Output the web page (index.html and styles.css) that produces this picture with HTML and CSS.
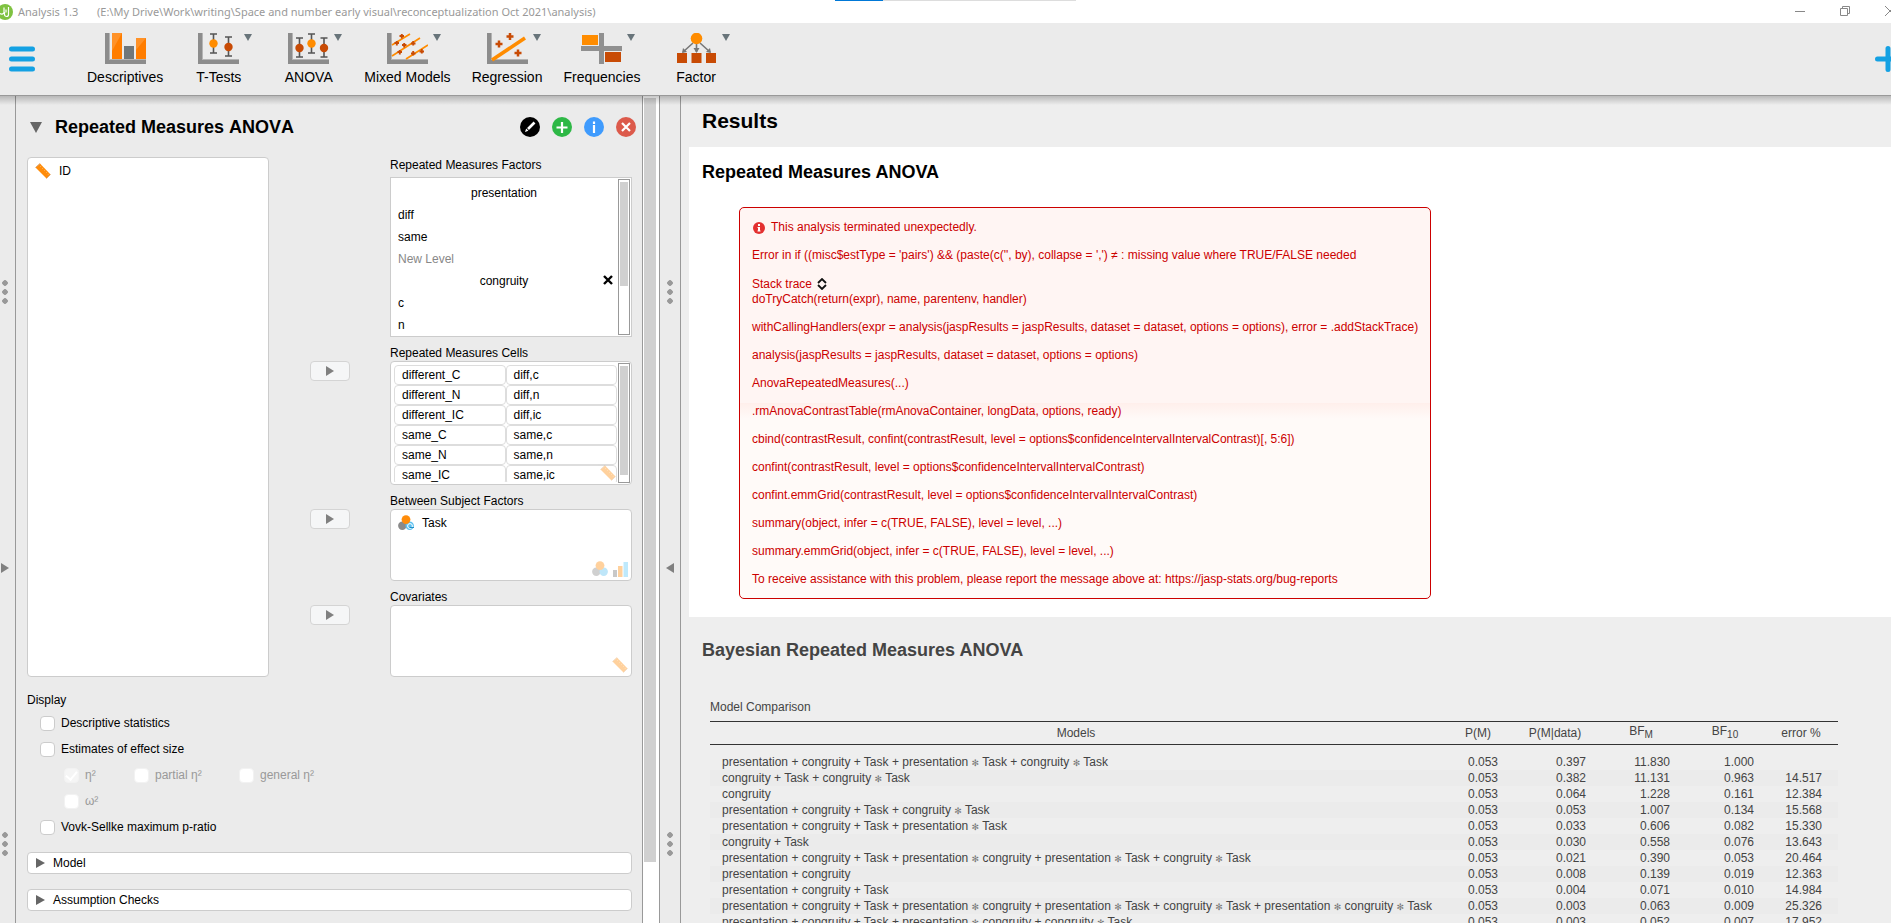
FILE: index.html
```html
<!DOCTYPE html>
<html lang="en">
<head>
<meta charset="utf-8">
<title>Analysis 1.3</title>
<link rel="stylesheet" href="styles.css">
</head>
<body>
<svg class="defs" aria-hidden="true">
  <defs>
    <symbol id="ruler" viewBox="0 0 16 16">
      <path d="M5 0.5L15.5 11.5L11.5 15.5L0.5 4.5Z" fill="#ff8c0a"/>
      <path d="M5 0.5L0.5 4.5M15.5 11.5L11.5 15.5" stroke="#d9a878" stroke-width="1"/>
      <path d="M6.5 2.5l-1.500 1.500M8.500 4.500l-1.500 1.500M10.500 6.500l-1.500 1.500M12.500 8.500l-1.500 1.500M14.200 10.500l-1.500 1.500" stroke="#ffb45c" stroke-width="0.800"/>
    </symbol>
    <symbol id="nominal" viewBox="0 0 16 16">
      <circle cx="4.300" cy="10.800" r="4.200" fill="#8a8a8a"/>
      <circle cx="11.700" cy="10.800" r="4.200" fill="#5cc0f0"/>
      <circle cx="8" cy="4.600" r="4.400" fill="#ff8c0a"/>
    </symbol>
    <symbol id="axes" viewBox="0 0 41 31">
      <path d="M0 0h5v26h36v5H0z" fill="#8c8c8c"/>
      <path d="M4 0h1v26h36v1H4z" fill="#b4b4b4"/>
    </symbol>
  </defs>
</svg>

<header class="titlebar">
  <svg class="logo" viewBox="0 0 13 16"><circle cx="5" cy="8" r="8" fill="#7fc241"/><path d="M8.500 3v7.500a2 2 0 0 1-4 0V8M4 3.500v5a2.500 2.500 0 0 1-4 1M6 5.500v3" fill="none" stroke="#fff" stroke-width="1.200"/></svg>
  <span class="app-name">Analysis 1.3</span>
  <span class="file-path">(E:\My Drive\Work\writing\Space and number early visual\reconceptualization Oct 2021\analysis)</span>
  <div class="top-progress"></div>
  <div class="window-buttons">
    <button aria-label="Minimize"><svg viewBox="0 0 10 10"><path d="M0 5.500h10"/></svg></button>
    <button aria-label="Restore"><svg viewBox="0 0 10 10"><path d="M.5 2.500h7v7h-7zM2.500 2.500v-2h7v7h-2"/></svg></button>
    <button aria-label="Close"><svg viewBox="0 0 10 10"><path d="M0 0l10 10M10 0L0 10"/></svg></button>
  </div>
</header>

<nav class="ribbon">
  <button class="menu-btn" aria-label="Menu"><svg viewBox="0 0 26 26"><path d="M2.500 3h21M2.500 13h21M2.500 23h21" stroke="#14a1e3" stroke-width="5" stroke-linecap="round"/></svg></button>
  <div class="modules">
    <button class="module">
      <span class="pic"><svg viewBox="0 0 41 31"><use href="#axes"/><path d="M7 0h10v26H7z" fill="#ff7d00"/><path d="M7 0h10L7 18z" fill="#ff9228"/><path d="M19 13h10v13H19z" fill="#6f777b"/><path d="M31 5h10v21H31z" fill="#ff7d00"/><path d="M31 5h10L31 17z" fill="#ff9228"/></svg></span>
      <span>Descriptives</span>
    </button>
    <button class="module">
      <span class="pic has-menu"><svg viewBox="0 0 41 31"><use href="#axes"/><path d="M12 1h7M15.500 1v19M12 20h7M27 4h7M30.500 4v19M27 23h7" stroke="#555" stroke-width="1.600" fill="none"/><circle cx="15.500" cy="10.500" r="4.200" fill="#ff8c00"/><circle cx="30.500" cy="14" r="4.200" fill="#c84b05"/></svg></span>
      <span>T-Tests</span>
    </button>
    <button class="module">
      <span class="pic has-menu"><svg viewBox="0 0 41 31"><use href="#axes"/><path d="M8 5h7M11.500 5v19M8 24h7M20 1h7M23.500 1v19M20 20h7M32.500 5h7M36 5v19M32.500 24h7" stroke="#555" stroke-width="1.600" fill="none"/><circle cx="11.500" cy="15" r="4.200" fill="#c84b05"/><circle cx="23.500" cy="10.500" r="4.200" fill="#ff8c00"/><circle cx="36" cy="15" r="4.200" fill="#c84b05"/></svg></span>
      <span>ANOVA</span>
    </button>
    <button class="module">
      <span class="pic has-menu"><svg viewBox="0 0 41 31"><use href="#axes"/><path d="M5 12L23 1M5 23L33 5M19 26L41 12" stroke="#ff8c00" stroke-width="1.700"/><path d="M12.500 3h4.500M14.800 1v4.500M7.500 10H12M9.800 8v4.500M15 12h4.500M17.200 10v4.500M24 10.500h4.500M26.200 8v4.500M10.500 19H15M12.800 17v4.500M24 20.500h4.500M26.200 18v4.500M32.500 18.500H37M34.800 16v4.500" stroke="#c84b05" stroke-width="1.900"/></svg></span>
      <span>Mixed Models</span>
    </button>
    <button class="module">
      <span class="pic has-menu"><svg viewBox="0 0 41 31"><use href="#axes"/><path d="M5 27L38 5" stroke="#ff8c00" stroke-width="3.600"/><path d="M19.500 3.500h7M23 0v7M8.500 11h7M12 7.500v7M27.500 20h7M31 16.500v7" stroke="#c84b05" stroke-width="2.500"/></svg></span>
      <span>Regression</span>
    </button>
    <button class="module">
      <span class="pic has-menu"><svg viewBox="0 0 41 31"><path d="M0 13h41v5H0zM18 0h5v31h-5z" fill="#909090"/><path d="M1 2h16v10H1z" fill="#ff8c00"/><path d="M24 19h16v10H24z" fill="#c84b05"/></svg></span>
      <span>Frequencies</span>
    </button>
    <button class="module">
      <span class="pic has-menu"><svg viewBox="0 0 41 31"><path d="M17 10L7 19M20.500 11v8M24 10l10 9" stroke="#777" stroke-width="1.600"/><path d="M6 20l1-5 4 4zM17.500 15h6l-3 5zM35 20l-1-5-4 4z" fill="#777"/><circle cx="20.500" cy="5.500" r="5.800" fill="#ff8c00"/><path d="M1 20h10v10H1zM15.500 20h10v10h-10zM30 20h10v10H30z" fill="#c84b05"/></svg></span>
      <span>Factor</span>
    </button>
  </div>
  <button class="add-btn" aria-label="Add modules"><svg viewBox="0 0 26 26"><path d="M2.500 13h21M13 2.500v21" stroke="#14a1e3" stroke-width="5" stroke-linecap="round"/></svg></button>
</nav>

<main class="workspace">
  <div class="splitter">
    <i class="dots dots-top"></i>
    <button class="split-arrow" aria-label="Show data"><svg viewBox="0 0 8 10"><path d="M0 0l8 5-8 5z"/></svg></button>
    <i class="dots dots-bottom"></i>
  </div>

  <section class="form-pane">
    <div class="form">
      <div class="form-head">
        <svg class="fold" viewBox="0 0 12 11"><path d="M0 0h12L6 11z"/></svg>
        <h2>Repeated Measures ANOVA</h2>
        <div class="actions">
          <button aria-label="Rename"><svg viewBox="0 0 20 20"><circle cx="10" cy="10" r="10" fill="#000"/><path d="M8 12l6.500-6.500" stroke="#fff" stroke-width="2.600"/><path d="M5 15l1.200-3.400 2.200 2.200z" fill="#fff"/></svg></button>
          <button aria-label="Duplicate"><svg viewBox="0 0 20 20"><circle cx="10" cy="10" r="10" fill="#2eb846"/><path d="M4.500 10.500h11M10 5v11" stroke="#fff" stroke-width="2.200"/></svg></button>
          <button aria-label="Information"><svg viewBox="0 0 20 20"><circle cx="10" cy="10" r="10" fill="#3f9bfd"/><path d="M10 8v8M10 4.500V7" stroke="#fff" stroke-width="2.200"/></svg></button>
          <button aria-label="Remove"><svg viewBox="0 0 20 20"><circle cx="10" cy="10" r="10" fill="#dc5a4b"/><path d="M6 6l8 8M14 6l-8 8" stroke="#fff" stroke-width="2.200"/></svg></button>
        </div>
      </div>

      <div class="assign">
        <div class="var-box source"><div class="var"><svg><use href="#ruler"/></svg>ID</div></div>

        <div class="target factors">
          <h3>Repeated Measures Factors</h3>
          <div class="var-box square">
            <div class="factor-list">
              <input class="factor" aria-label="Factor 1" value="presentation">
              <input aria-label="Level 1" value="diff">
              <input aria-label="Level 2" value="same">
              <input aria-label="Add level" placeholder="New Level">
              <div class="factor-row"><input class="factor" aria-label="Factor 2" value="congruity"><button aria-label="Delete factor"><svg viewBox="0 0 10 10"><path d="M1 1l8 8M9 1L1 9" stroke="#000" stroke-width="2.400"/></svg></button></div>
              <input aria-label="Level 1" value="c">
              <input aria-label="Level 2" value="n">
            </div>
            <div class="scroll"><i class="thumb two-thirds"></i></div>
          </div>
        </div>

        <button class="move" aria-label="Assign cells"><svg viewBox="0 0 8 10"><path d="M0 0l8 5-8 5z"/></svg></button>
        <div class="target cells">
          <h3>Repeated Measures Cells</h3>
          <div class="var-box">
            <div class="cell-grid">
              <span>different_C</span><span>diff,c</span>
              <span>different_N</span><span>diff,n</span>
              <span>different_IC</span><span>diff,ic</span>
              <span>same_C</span><span>same,c</span>
              <span>same_N</span><span>same,n</span>
              <span>same_IC</span><span>same,ic</span>
            </div>
            <div class="scroll"><i class="thumb most"></i></div>
            <div class="allowed beside-scroll"><svg><use href="#ruler"/></svg></div>
          </div>
        </div>

        <button class="move" aria-label="Assign between subject factors"><svg viewBox="0 0 8 10"><path d="M0 0l8 5-8 5z"/></svg></button>
        <div class="target small">
          <h3>Between Subject Factors</h3>
          <div class="var-box">
            <div class="var"><svg viewBox="0 0 16 16"><use href="#nominal"/><circle cx="12" cy="11" r="2.400" fill="none" stroke="#fff"/><path d="M11.500 12.500h5" stroke="#1e8fc8"/></svg>Task</div>
            <div class="allowed"><svg><use href="#nominal"/></svg><svg viewBox="0 0 16 16"><path d="M1 9h4v7H1z" fill="#777"/><path d="M6 5h4.500v11H6z" fill="#ff8c0a"/><path d="M11.500 1H16v15h-4.500z" fill="#5cc8f8"/></svg></div>
          </div>
        </div>

        <button class="move" aria-label="Assign covariates"><svg viewBox="0 0 8 10"><path d="M0 0l8 5-8 5z"/></svg></button>
        <div class="target small">
          <h3>Covariates</h3>
          <div class="var-box"><div class="allowed"><svg><use href="#ruler"/></svg></div></div>
        </div>
      </div>

      <fieldset class="display">
        <legend>Display</legend>
        <label><input type="checkbox">Descriptive statistics</label>
        <label><input type="checkbox">Estimates of effect size</label>
        <div class="effects">
          <label><input type="checkbox" checked disabled>η²</label>
          <label><input type="checkbox" disabled>partial η²</label>
          <label><input type="checkbox" disabled>general η²</label>
          <label><input type="checkbox" disabled>ω²</label>
        </div>
        <label><input type="checkbox">Vovk-Sellke maximum p-ratio</label>
      </fieldset>

      <button class="section"><svg viewBox="0 0 9 10"><path d="M0 0l9 5-9 5z"/></svg>Model</button>
      <button class="section"><svg viewBox="0 0 9 10"><path d="M0 0l9 5-9 5z"/></svg>Assumption Checks</button>
    </div>
    <div class="form-scroll"><i class="form-thumb"></i></div>
  </section>

  <div class="splitter mid">
    <i class="dots dots-top"></i>
    <button class="split-arrow" aria-label="Hide form"><svg viewBox="0 0 8 10"><path d="M8 0L0 5l8 5z"/></svg></button>
    <i class="dots dots-bottom"></i>
  </div>

  <section class="results">
    <h1>Results</h1>
    <article class="analysis selected">
      <h2>Repeated Measures ANOVA</h2>
      <div class="error-box">
        <p class="lead"><svg viewBox="0 0 12 12"><circle cx="6" cy="6" r="6" fill="#e33030"/><path d="M5 2h2v2H5zM4.500 5H7v4H5V6h-.5zM4.500 8.500h3V9.500h-3z" fill="#fff"/></svg>This analysis terminated unexpectedly.</p>
        <p>Error in if ((misc$estType = 'pairs') &amp;&amp; (paste(c('', by), collapse = ',') ≠ : missing value where TRUE/FALSE needed</p>
        <p class="trace">Stack trace <button aria-label="Toggle stack trace"><svg viewBox="0 0 10 12"><path d="M1 5l4-4 4 4M1 7l4 4 4-4" fill="none" stroke="#111" stroke-width="1.800"/></svg></button></p>
        <p>doTryCatch(return(expr), name, parentenv, handler)</p>
        <p>withCallingHandlers(expr = analysis(jaspResults = jaspResults, dataset = dataset, options = options), error = .addStackTrace)</p>
        <p>analysis(jaspResults = jaspResults, dataset = dataset, options = options)</p>
        <p>AnovaRepeatedMeasures(...)</p>
        <p>.rmAnovaContrastTable(rmAnovaContainer, longData, options, ready)</p>
        <p>cbind(contrastResult, confint(contrastResult, level = options$confidenceIntervalIntervalContrast)[, 5:6])</p>
        <p>confint(contrastResult, level = options$confidenceIntervalIntervalContrast)</p>
        <p>confint.emmGrid(contrastResult, level = options$confidenceIntervalIntervalContrast)</p>
        <p>summary(object, infer = c(TRUE, FALSE), level = level, ...)</p>
        <p>summary.emmGrid(object, infer = c(TRUE, FALSE), level = level, ...)</p>
        <p>To receive assistance with this problem, please report the message above at: https://jasp-stats.org/bug-reports</p>
      </div>
    </article>
    <article class="analysis faded">
      <h2>Bayesian Repeated Measures ANOVA</h2>
      <table>
        <caption>Model Comparison</caption>
        <colgroup><col class="c-models"><col class="c-pm"><col class="c-pmd"><col class="c-bf"><col class="c-bf"><col class="c-err"></colgroup>
        <thead><tr><th>Models</th><th>P(M)</th><th>P(M|data)</th><th>BF<sub>M</sub></th><th>BF<sub>10</sub></th><th>error %</th></tr></thead>
        <tbody>
          <tr><td>presentation + congruity + Task + presentation <i>✻</i> Task + congruity <i>✻</i> Task</td><td>0.053</td><td>0.397</td><td>11.830</td><td>1.000</td><td></td></tr>
          <tr><td>congruity + Task + congruity <i>✻</i> Task</td><td>0.053</td><td>0.382</td><td>11.131</td><td>0.963</td><td>14.517</td></tr>
          <tr><td>congruity</td><td>0.053</td><td>0.064</td><td>1.228</td><td>0.161</td><td>12.384</td></tr>
          <tr><td>presentation + congruity + Task + congruity <i>✻</i> Task</td><td>0.053</td><td>0.053</td><td>1.007</td><td>0.134</td><td>15.568</td></tr>
          <tr><td>presentation + congruity + Task + presentation <i>✻</i> Task</td><td>0.053</td><td>0.033</td><td>0.606</td><td>0.082</td><td>15.330</td></tr>
          <tr><td>congruity + Task</td><td>0.053</td><td>0.030</td><td>0.558</td><td>0.076</td><td>13.643</td></tr>
          <tr><td>presentation + congruity + Task + presentation <i>✻</i> congruity + presentation <i>✻</i> Task + congruity <i>✻</i> Task</td><td>0.053</td><td>0.021</td><td>0.390</td><td>0.053</td><td>20.464</td></tr>
          <tr><td>presentation + congruity</td><td>0.053</td><td>0.008</td><td>0.139</td><td>0.019</td><td>12.363</td></tr>
          <tr><td>presentation + congruity + Task</td><td>0.053</td><td>0.004</td><td>0.071</td><td>0.010</td><td>14.984</td></tr>
          <tr><td>presentation + congruity + Task + presentation <i>✻</i> congruity + presentation <i>✻</i> Task + congruity <i>✻</i> Task + presentation <i>✻</i> congruity <i>✻</i> Task</td><td>0.053</td><td>0.003</td><td>0.063</td><td>0.009</td><td>25.326</td></tr>
          <tr><td>presentation + congruity + Task + presentation <i>✻</i> congruity + congruity <i>✻</i> Task</td><td>0.053</td><td>0.003</td><td>0.052</td><td>0.007</td><td>17.952</td></tr>
        </tbody>
      </table>
    </article>
  </section>
</main>
</body>
</html>
```

FILE: styles.css
```css
* { box-sizing: border-box; }

body {
  margin: 0;
  height: 100vh;
  overflow: hidden;
  display: flex;
  flex-direction: column;
  background: #ebebeb;
  color: #000;
  font: 12px/16px "Liberation Sans", Arial, sans-serif;
}

h1, h2, h3, p { margin: 0; }
svg { display: block; flex: none; }
button { padding: 0; border: 0; background: none; font: inherit; color: inherit; cursor: pointer; }
.defs { position: absolute; width: 0; height: 0; }

/* Title bar */
.titlebar {
  position: relative;
  flex: none;
  height: 23px;
  display: flex;
  align-items: center;
  background: #fff;
  color: #999;
  font-family: "Noto Sans", sans-serif;
  font-size: 11px;
  white-space: pre;
}
.logo { width: 13px; height: 16px; margin-right: 5px; }
.app-name { width: 79px; }
.top-progress {
  position: absolute;
  top: 0;
  left: 44%;
  width: 241px;
  height: 1px;
  margin-left: 3px;
  background: linear-gradient(90deg, #0078d7 48px, #ddd 48px);
}
.window-buttons { display: flex; gap: 35px; margin: 0 -4px 2px auto; }
.window-buttons svg { width: 10px; height: 10px; fill: none; stroke: #888; }

/* Ribbon */
.ribbon {
  flex: none;
  display: flex;
  align-items: flex-start;
  height: 73px;
  padding: 10px 0 0 9px;
  border-bottom: 1px solid #999;
}
.menu-btn, .add-btn { margin-top: 13px; }
.menu-btn svg, .add-btn svg { width: 26px; height: 26px; }
.add-btn { margin-left: auto; margin-right: -10px; }
.modules { display: flex; gap: 21px; margin-left: 52px; }
.module {
  min-width: 69px;
  display: flex;
  flex-direction: column;
  align-items: center;
  gap: 5px;
  font-size: 14px;
  white-space: nowrap;
}
.pic { position: relative; }
.pic svg { width: 41px; height: 31px; }
.has-menu::after {
  content: "";
  position: absolute;
  left: 46px;
  top: 1px;
  border: 4px solid transparent;
  border-top: 7px solid #68747a;
  border-bottom: 0;
}

/* Workspace */
.workspace {
  position: relative;
  flex: 1;
  min-height: 0;
  display: grid;
  grid-template-columns: 16px 644fr 21px 1210fr;
}
.workspace::before {
  content: "";
  position: absolute;
  z-index: 1;
  inset: 0 0 auto;
  height: 9px;
  background: linear-gradient(rgba(0, 0, 0, .22), transparent);
}
.splitter {
  display: grid;
  grid-template-rows: 174px 283fr 30px 249fr 91px;
  justify-items: start;
  padding-left: 1px;
  border-right: 1px solid #999;
}
.mid { padding-left: 6px; }
.dots {
  width: 6px;
  height: 24px;
  margin-left: 1px;
  background: radial-gradient(circle at 3px 3px, #999 2.5px, transparent 3px) 0 0 / 6px 9px;
}
.dots-top { grid-row: 2; margin-top: 10px; }
.split-arrow { grid-row: 3; align-self: center; }
.split-arrow svg { width: 8px; height: 10px; fill: #808080; }
.dots-bottom { grid-row: 5; align-self: start; }

/* Options form */
.form-pane { display: flex; min-width: 0; min-height: 0; overflow: hidden; }
.form { flex: 1; min-width: 0; padding: 21px 10px 0 11px; }
.form-scroll {
  width: 18px;
  padding: 2px 3px 0 1px;
  border-left: 1px solid #999;
  border-right: 1px solid #999;
  background: #fff;
}
.form-thumb { display: block; height: 764px; background: #d0d0d0; }
.form-head { display: flex; align-items: center; padding-left: 3px; height: 20px; }
.fold { width: 12px; height: 11px; margin-right: 13px; fill: #666; }
.form-head h2 { font-size: 18px; line-height: 20px; font-kerning: none; white-space: nowrap; }
.actions { display: flex; gap: 12px; margin-left: auto; margin-right: -4px; }
.actions svg { width: 20px; height: 20px; }

.assign {
  display: grid;
  grid-template-columns: 1fr 121px 1fr;
  row-gap: 8px;
  margin-top: 20px;
}
.source { grid-row: 1 / 5; }
.target { grid-column: 3; display: flex; flex-direction: column; }
.target h3 { font-size: 12px; line-height: 16px; font-weight: 400; }
.target .var-box { flex: 1; }
.factors h3 { margin-bottom: 4px; }
.factors .var-box { height: 160px; flex: none; }
.cells .var-box { height: 124px; flex: none; }
.small .var-box { height: 72px; flex: none; }
.var-box {
  position: relative;
  display: flex;
  align-items: flex-start;
  background: #fff;
  border: 1px solid #ccc;
  border-radius: 4px;
  overflow: hidden;
}
.square { border-radius: 0; }
.var { display: flex; align-items: center; gap: 8px; padding: 5px 7px; }
.var svg, .allowed svg { width: 16px; height: 16px; }
.allowed { position: absolute; right: 3px; bottom: 3px; display: flex; gap: 4px; opacity: .4; }
.beside-scroll { right: 15px; }
.factor-list { flex: 1; min-width: 0; padding-top: 4px; }
.factor-list input {
  display: block;
  width: 100%;
  height: 22px;
  padding: 0 7px;
  border: 0;
  background: none;
  font: inherit;
  color: inherit;
  outline: 0;
}
.factor-list input::placeholder { color: #888; opacity: 1; }
.factor-list .factor { text-align: center; }
.factor-row { position: relative; }
.factor-row button { position: absolute; right: 4px; top: 5px; }
.factor-row svg { width: 10px; height: 10px; }
.scroll {
  align-self: stretch;
  flex: none;
  width: 12px;
  margin: 1px;
  padding: 2px 1px;
  border: 1px solid #999;
}
.thumb { display: block; background: #d0d0d0; }
.two-thirds { height: 69%; }
.most { height: 96%; }
.cell-grid {
  flex: 1;
  display: grid;
  grid-template-columns: 1fr 1fr;
  grid-auto-rows: 20px;
  height: 120px;
  padding: 3px 0 0 3px;
  overflow: hidden;
}
.cell-grid span {
  padding-left: 7px;
  line-height: 18px;
  border: 1px solid #ddd;
  border-radius: 4px;
}
.move {
  grid-column: 2;
  justify-self: center;
  display: flex;
  align-items: center;
  justify-content: center;
  width: 40px;
  height: 20px;
  margin-top: 16px;
  background: #f5f6f7;
  border: 1px solid #d4d4d4;
  border-radius: 4px;
}
.move svg { width: 8px; height: 10px; fill: #808080; }

.display { margin: 15px 0 0; padding: 0; border: 0; }
.display legend { padding: 0; margin-bottom: 2px; }
.display label { display: flex; align-items: center; gap: 6px; height: 26px; padding-left: 13px; }
.display input {
  appearance: none;
  flex: none;
  width: 15px;
  height: 15px;
  margin: 0;
  background: #fff;
  border: 1px solid #ccc;
  border-radius: 4px;
}
.display input:disabled { border-color: #f2f2f2; }
.display input:checked {
  background: #f5f5f5;
  display: flex;
  align-items: center;
  justify-content: center;
}
.display input:checked::before {
  content: "";
  width: 5px;
  height: 9px;
  margin-bottom: 2px;
  border: solid #fff;
  border-width: 0 2px 2px 0;
  transform: rotate(40deg);
}
.effects {
  display: grid;
  grid-template-columns: 70px 105px auto;
  justify-content: start;
  padding-left: 37px;
  color: #999;
}
.effects label { padding-left: 0; }
.section {
  display: flex;
  align-items: center;
  gap: 8px;
  width: 100%;
  height: 22px;
  margin-top: 15px;
  padding-left: 8px;
  background: #fff;
  border: 1px solid #ccc;
  border-radius: 4px;
}
.display + .section { margin-top: 12px; }
.section svg { width: 9px; height: 10px; fill: #666; }

/* Results */
.results { min-width: 0; min-height: 0; overflow: hidden; background: #eee; padding-left: 8px; }
.results h1 { padding: 13px 13px 14px; font-size: 21px; line-height: 24px; }
.analysis { padding-left: 13px; }
.analysis h2 { font-size: 18px; line-height: 20px; }
.selected { padding-top: 15px; padding-bottom: 18px; background: #fff; }
.error-box {
  width: fit-content;
  margin: 25px 0 0 37px;
  padding: 12px;
  border: 1px solid #c00;
  border-radius: 5px;
  background: linear-gradient(#fff5f3 50%, #ffefeb 50%, #fffaf8 54%);
  color: #c00;
  line-height: 14px;
}
.error-box p + p { margin-top: 14px; }
.error-box .lead { display: flex; align-items: center; gap: 6px; padding-left: 1px; }
.lead svg { width: 12px; height: 12px; margin-top: 1px; }
.error-box .trace { display: flex; align-items: center; gap: 5px; line-height: 16px; }
.error-box .trace + p { margin-top: 0; }
.trace svg { width: 10px; height: 12px; }
.faded { padding-top: 23px; color: #444; }

table { margin: 39px 0 0 8px; border-collapse: separate; border-spacing: 0; table-layout: fixed; width: 1128px; white-space: nowrap; }
caption { text-align: left; padding-bottom: 6px; line-height: 16px; }
.c-models { width: 732px; }
.c-pm { width: 72px; }
.c-pmd { width: 88px; }
.c-bf { width: 84px; }
.c-err { width: 68px; }
th { height: 24px; padding: 0; font-weight: 400; line-height: 14px; border-top: 1px solid #333; border-bottom: 1px solid #333; }
th:nth-child(n+3) { padding-right: 6px; }
sub { font-size: 10px; line-height: 14px; }
td { height: 16px; padding: 0 16px 0 0; line-height: 16px; text-align: right; }
td:first-child { padding: 0 0 0 12px; text-align: left; }
td i { font: 9px/12px "DejaVu Sans", sans-serif; color: #777; }
tbody::before { content: ""; display: table-row; height: 9px; }
tbody tr:nth-child(even) { background: #ebebeb; }
```
